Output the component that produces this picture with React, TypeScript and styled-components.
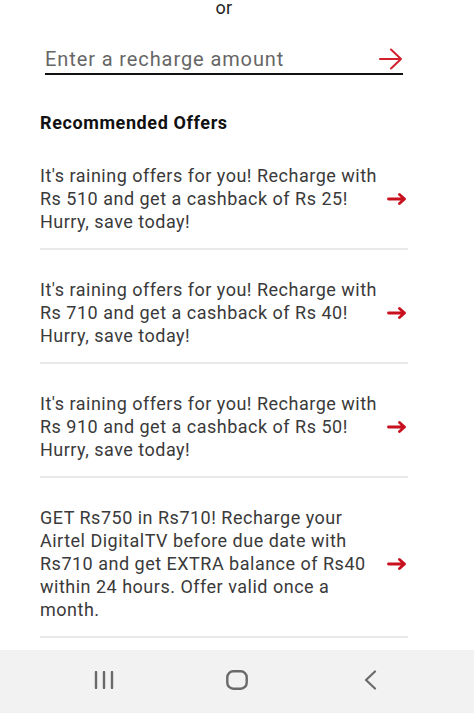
import React from "react";
import styled, { createGlobalStyle } from "styled-components";

const Global = createGlobalStyle`
  html, body { margin: 0; padding: 0; background: #ffffff; }
  body { font-family: Roboto, "Noto Sans", Arial, sans-serif; -webkit-font-smoothing: antialiased; }
  * { box-sizing: border-box; }
`;

const Page = styled.div`
  width: 474px;
  height: 713px;
  display: flex;
  flex-direction: column;
  overflow: hidden;
  background: #fff;
`;

const Content = styled.div`
  flex: 1;
  padding: 0 66px 0 40px;
  display: flex;
  flex-direction: column;
`;

const OrText = styled.div`
  margin-top: -3px;
  text-align: center;
  font-size: 18px;
  line-height: 22px;
  letter-spacing: 0.4px;
  color: #222;
`;

const AmountField = styled.label`
  margin: 28px 5px 0 5px;
  display: flex;
  align-items: center;
  padding-bottom: 2px;
  border-bottom: 2.5px solid #111;
`;

const AmountInput = styled.input`
  flex: 1;
  border: none;
  outline: none;
  padding: 0;
  margin: 0;
  font-family: inherit;
  font-size: 20px;
  line-height: 24px;
  height: 24px;
  letter-spacing: 0.9px;
  color: #333;
  background: transparent;
  &::placeholder { color: #666; opacity: 1; }
`;

const Heading = styled.h2`
  margin: 38px 0 3px 0;
  font-size: 18px;
  line-height: 20px;
  font-weight: 700;
  letter-spacing: 0.6px;
  color: #111;
`;

const OfferRow = styled.div`
  display: flex;
  align-items: center;
  justify-content: space-between;
  padding: 28px 0 15px 0;
  border-bottom: 2px solid #e9e9e9;
`;

const OfferText = styled.p`
  margin: 0;
  font-size: 18px;
  line-height: 23px;
  letter-spacing: 0.5px;
  color: #3a3a3a;
`;

const ArrowWrap = styled.span`
  display: flex;
  flex: none;
  margin-right: 1px;
`;

const NavBar = styled.div`
  height: 63px;
  flex: none;
  background: #f2f2f2;
  display: flex;
  justify-content: center;
  align-items: center;
  gap: 109px;
  padding-bottom: 8px;
  padding-top: 4px;
`;

const NavButton = styled.span`
  width: 24px;
  height: 20px;
  display: flex;
  align-items: center;
  justify-content: center;
`;

const offers: string[][] = [
  ["It's raining offers for you! Recharge with", "Rs 510 and get a cashback of Rs 25!", "Hurry, save today!"],
  ["It's raining offers for you! Recharge with", "Rs 710 and get a cashback of Rs 40!", "Hurry, save today!"],
  ["It's raining offers for you! Recharge with", "Rs 910 and get a cashback of Rs 50!", "Hurry, save today!"],
  [
    "GET Rs750 in Rs710! Recharge your",
    "Airtel DigitalTV before due date with",
    "Rs710 and get EXTRA balance of Rs40",
    "within 24 hours. Offer valid once a",
    "month.",
  ],
];

const ThinArrow = () => (
  <svg width="24" height="22" viewBox="0 0 24 22" fill="none">
    <path d="M1 11H22M12 1.5L22 11L12 20.5" stroke="#d3202e" strokeWidth="2" strokeLinecap="round" strokeLinejoin="round" />
  </svg>
);

const BoldArrow = () => (
  <svg width="20" height="12" viewBox="0 0 20 12" fill="none">
    <path d="M1.5 6H17.5M12.5 1.5L17.5 6L12.5 10.5" stroke="#c8101e" strokeWidth="2.8" strokeLinecap="round" strokeLinejoin="round" />
  </svg>
);

export default function App() {
  return (
    <Page>
      <Global />
      <Content>
        <OrText>or</OrText>
        <AmountField>
          <AmountInput placeholder="Enter a recharge amount" />
          <ThinArrow />
        </AmountField>
        <Heading>Recommended Offers</Heading>
        {offers.map((lines, i) => (
          <OfferRow key={i}>
            <OfferText>
              {lines.map((l, j) => (
                <React.Fragment key={j}>
                  {l}
                  {j < lines.length - 1 && <br />}
                </React.Fragment>
              ))}
            </OfferText>
            <ArrowWrap>
              <BoldArrow />
            </ArrowWrap>
          </OfferRow>
        ))}
      </Content>
      <NavBar>
        <NavButton>
          <svg width="20" height="18" viewBox="0 0 20 18" fill="none">
            <path d="M2 1V17M10 1V17M18 1V17" stroke="#6a6a6a" strokeWidth="2.4" strokeLinecap="round" />
          </svg>
        </NavButton>
        <NavButton>
          <svg width="24" height="20" viewBox="0 0 24 20" fill="none">
            <rect x="2.3" y="1.3" width="19.4" height="17.4" rx="6" stroke="#6a6a6a" strokeWidth="2.4" />
          </svg>
        </NavButton>
        <NavButton>
          <svg width="14" height="20" viewBox="0 0 14 20" fill="none">
            <path d="M12 1.5L3 10L12 18.5" stroke="#6a6a6a" strokeWidth="2.2" strokeLinecap="round" strokeLinejoin="round" />
          </svg>
        </NavButton>
      </NavBar>
    </Page>
  );
}
